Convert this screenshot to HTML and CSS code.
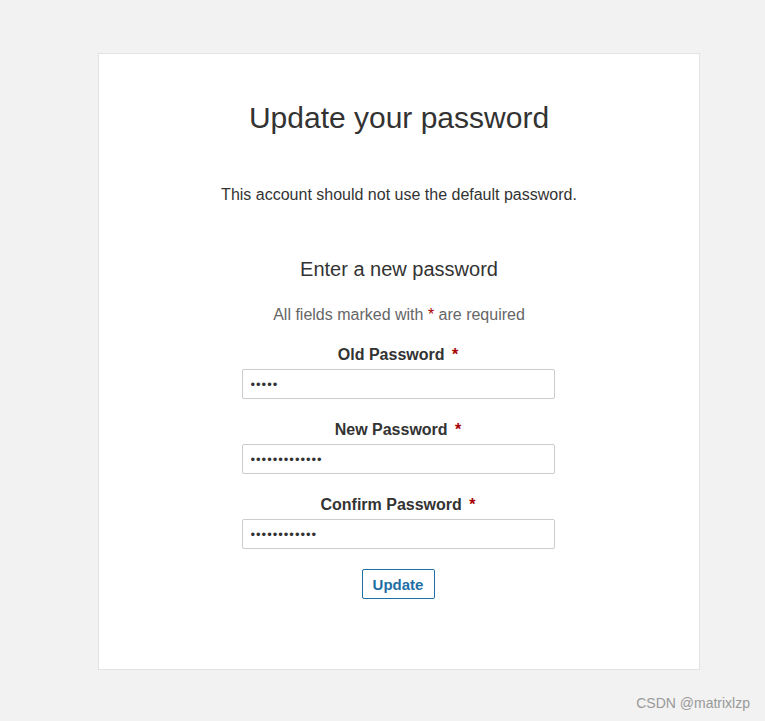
FILE: index.html
```html
<!DOCTYPE html>
<html>
<head>
<meta charset="utf-8">
<link rel="stylesheet" href="styles.css">
</head>
<body>
<div class="page">
  <div class="card">
    <h1 class="title">Update your password</h1>
    <p class="intro">This account should not use the default password.</p>
    <h2 class="subtitle">Enter a new password</h2>
    <p class="req">All fields marked with <span class="star">*</span> are required</p>
    <form class="form">
      <div class="field">
        <label class="label">Old Password <span class="star">*</span></label>
        <input class="input" type="password" value="12345">
      </div>
      <div class="field">
        <label class="label">New Password <span class="star">*</span></label>
        <input class="input" type="password" value="1234567890123">
      </div>
      <div class="field">
        <label class="label">Confirm Password <span class="star">*</span></label>
        <input class="input" type="password" value="123456789012">
      </div>
      <button class="btn" type="button">Update</button>
    </form>
  </div>
  <div class="watermark">CSDN @matrixlzp</div>
</div>
</body>
</html>
```
FILE: styles.css
```css
html, body {
  margin: 0;
  padding: 0;
  background: #f2f2f2;
  font-family: "Liberation Sans", Arial, sans-serif;
  color: #333;
}
.page {
  width: 765px;
  height: 721px;
  position: relative;
  padding-top: 53px;
  box-sizing: border-box;
}
.card {
  margin-left: 98px;
  width: 602px;
  height: 617px;
  box-sizing: border-box;
  background: #fff;
  border: 1px solid #e3e3e3;
  display: flex;
  flex-direction: column;
  align-items: center;
  text-align: center;
}
.title {
  margin: 46px 0 0;
  font-size: 30px;
  font-weight: normal;
  line-height: 36px;
  color: #333;
}
.intro {
  margin: 49px 0 0;
  font-size: 16px;
  line-height: 20px;
  color: #333;
}
.subtitle {
  margin: 52px 0 0;
  font-size: 20px;
  font-weight: normal;
  line-height: 24px;
  color: #333;
}
.req {
  margin: 24px 0 0;
  font-size: 16px;
  line-height: 20px;
  color: #666;
}
.star {
  color: #a80000;
}
.label .star {
  margin-left: 3px;
}
.form {
  margin-top: 20px;
  margin-right: 2px;
  display: flex;
  flex-direction: column;
  align-items: center;
}
.field {
  display: flex;
  flex-direction: column;
  align-items: center;
  margin-bottom: 20px;
}
.label {
  font-size: 16px;
  font-weight: bold;
  line-height: 20px;
  color: #333;
  margin-bottom: 4px;
}
.field + .field .label {
  margin-top: 1px;
}
.input {
  width: 313px;
  height: 30px;
  box-sizing: border-box;
  border: 1px solid #ccc;
  border-radius: 2px;
  padding: 0 8px;
  font-family: "Liberation Sans", Arial, sans-serif;
  font-size: 13px;
  color: #333;
  letter-spacing: 1px;
  outline: none;
}
.btn {
  margin-top: 0;
  width: 73px;
  height: 30px;
  box-sizing: border-box;
  background: #fff;
  border: 1px solid #1d6fa5;
  border-radius: 2px;
  color: #1d6fa5;
  font-family: "Liberation Sans", Arial, sans-serif;
  font-weight: bold;
  font-size: 15px;
  padding: 0;
}
.watermark {
  position: absolute;
  right: 15px;
  bottom: 10px;
  font-size: 14px;
  color: #999;
}
```
